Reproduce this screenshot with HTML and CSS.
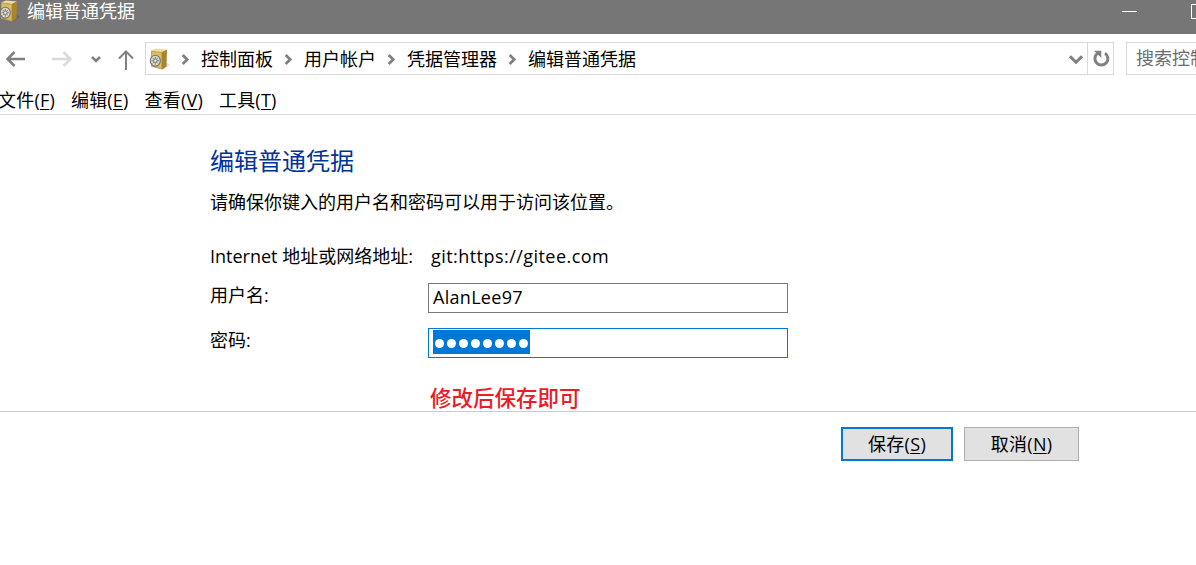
FILE: index.html
```html
<!DOCTYPE html>
<html lang="zh-CN">
<head>
<meta charset="utf-8">
<title>编辑普通凭据</title>
<link rel="stylesheet" href="styles.css">
</head>
<body>
  <svg class="defs" width="0" height="0">
    <symbol id="safe" viewBox="0 0 21 22">
      <path d="M3 19 L14 21.800 L20.800 17 L18 15z" fill="#000" opacity=".12"/>
      <path d="M2 2.500 L7 .6 L18 1.500 L13 4z" fill="#f0dc96"/>
      <path d="M2 2.500 L13 4 L13 21.500 L2 18.500z" fill="#c9a64a"/>
      <path d="M13 4 L18 1.500 L17.500 18.500 L13 21.500z" fill="#a8842c"/>
      <path d="M3 3.700 L12 5 V19.800 L3 17.500z" fill="#d8bd6a"/>
      <ellipse cx="6.300" cy="12.700" rx="5" ry="5.400" fill="#dcdbd4" stroke="#77756b" stroke-width="1.100"/>
      <path d="M6.300 8.700 V16.700 M2.500 12.700 H10 M3.700 9.900 L8.900 15.500 M8.900 9.900 L3.700 15.500" stroke="#77766f" stroke-width=".9"/>
      <circle cx="6.300" cy="12.700" r="1.700" fill="#eee" stroke="#66655f" stroke-width=".8"/>
    </symbol>
    <symbol id="chevron" viewBox="0 0 9 11">
      <path d="M1.700 1 L6.200 5.500 L1.700 10" fill="none" stroke="#808080" stroke-width="2.800"/>
    </symbol>
  </svg>

  <header class="titlebar">
    <svg class="safe"><use href="#safe"/></svg>
    <span class="caption">编辑普通凭据</span>
    <span class="minimize"></span>
    <span class="maximize"></span>
  </header>

  <nav class="navbar">
    <svg class="arrow back" viewBox="0 0 20 18"><path d="M19 9 H2 M8.500 2 L1.500 9 L8.500 16"/></svg>
    <svg class="arrow forward" viewBox="0 0 20 18"><path d="M0 9 H18 M11.500 2 L18.500 9 L11.500 16"/></svg>
    <svg class="recent" viewBox="0 0 10 7"><path d="M1 1 L5 5 L9 1"/></svg>
    <svg class="arrow up" viewBox="0 0 16 20"><path d="M8 20 V2 M1 8.500 L8 1.500 L15 8.500"/></svg>
    <div class="address">
      <svg class="safe"><use href="#safe"/></svg>
      <svg class="chevron"><use href="#chevron"/></svg>
      <span>控制面板</span>
      <svg class="chevron"><use href="#chevron"/></svg>
      <span>用户帐户</span>
      <svg class="chevron"><use href="#chevron"/></svg>
      <span>凭据管理器</span>
      <svg class="chevron"><use href="#chevron"/></svg>
      <span>编辑普通凭据</span>
      <svg class="dropdown" viewBox="0 0 14 9"><path d="M1 1.300 L7 7.300 L13 1.300"/></svg>
      <div class="refresh">
        <svg viewBox="0 0 17 17"><path class="ring" d="M12 3.200 A6.500 6.500 0 1 1 4.500 3.400"/><path class="head" d="M1 .8 H8.300 V8.100z"/></svg>
      </div>
    </div>
    <div class="search">搜索控制</div>
  </nav>

  <ul class="menu">
    <li>文件(<u>F</u>)</li>
    <li>编辑(<u>E</u>)</li>
    <li>查看(<u>V</u>)</li>
    <li>工具(<u>T</u>)</li>
  </ul>

  <main class="content">
    <h1>编辑普通凭据</h1>
    <p class="hint">请确保你键入的用户名和密码可以用于访问该位置。</p>
    <div class="row location">
      <span class="label">Internet 地址或网络地址:</span>
      <span class="value">git:https://gitee.com</span>
    </div>
    <div class="row">
      <span class="label">用户名:</span>
      <div class="field">AlanLee97</div>
    </div>
    <div class="row">
      <span class="label">密码:</span>
      <div class="field focused"><span class="selection"><i></i><i></i><i></i><i></i><i></i><i></i><i></i><i></i></span></div>
    </div>
    <p class="note">修改后保存即可</p>
  </main>

  <footer class="buttons">
    <button class="save">保存(<u>S</u>)</button>
    <button class="cancel">取消(<u>N</u>)</button>
  </footer>
</body>
</html>
```
FILE: styles.css
```css
* {
  box-sizing: border-box;
}

body {
  margin: 0;
  height: 565px;
  overflow: hidden;
  background: #fff;
  color: #000;
  font: 18px/24px "Open Sans", "Noto Sans CJK SC", sans-serif;
  white-space: nowrap;
}

h1, p, ul {
  margin: 0;
  padding: 0;
  font-weight: normal;
}

svg {
  flex: none;
  display: block;
}

.defs {
  position: absolute;
}

.safe {
  width: 21px;
  height: 22px;
}

/* title bar */
.titlebar {
  display: flex;
  height: 34px;
  overflow: hidden;
  background: #767676;
  color: #fff;
}

.titlebar .safe {
  margin-left: -1px;
}

.caption {
  margin-left: 7px;
  line-height: 23px;
}

.minimize {
  width: 15px;
  height: 1px;
  margin: 11px 54px 0 auto;
  background: #fff;
}

.maximize {
  width: 5px;
  height: 15px;
  margin-top: 4px;
  border: 1px solid #fff;
  border-right: 0;
}

/* navigation */
.navbar {
  display: flex;
  align-items: center;
  height: 49px;
  padding-left: 6px;
}

.arrow, .recent, .dropdown {
  fill: none;
  stroke: #808080;
  stroke-width: 2.6;
}

.back, .forward {
  width: 20px;
  height: 18px;
  margin-top: 1px;
}

.forward {
  margin-left: 26px;
  stroke: #dadada;
}

.recent {
  width: 10px;
  height: 7px;
  margin: 1px 0 0 19px;
}

.up {
  width: 16px;
  height: 20px;
  margin: 3px 11px 0 17px;
  stroke-width: 2;
}

.address {
  display: flex;
  align-items: center;
  width: 969px;
  height: 33px;
  flex: none;
  padding-left: 3px;
  border: 1px solid #d9d9d9;
}

.chevron {
  width: 9px;
  height: 11px;
  margin: 1px 11px 0;
}

.dropdown {
  width: 14px;
  height: 9px;
  margin: 1px 4px 0 auto;
  stroke-width: 3;
}

.refresh {
  display: flex;
  align-items: center;
  justify-content: center;
  width: 26px;
  height: 31px;
  padding-left: 1px;
  border-left: 1px solid #d9d9d9;
}

.refresh svg {
  width: 17px;
  height: 17px;
}

.ring {
  fill: none;
  stroke: #808080;
  stroke-width: 3;
}

.head {
  fill: #808080;
}

.search {
  flex: 1;
  width: 0;
  height: 33px;
  overflow: hidden;
  margin-left: 12px;
  padding: 3px 0 3px 9px;
  border: 1px solid #d9d9d9;
  border-right: 0;
  color: #6d6d6d;
}

/* menu */
.menu {
  display: flex;
  height: 32px;
  padding-top: 5px;
  margin-left: -2px;
  border-bottom: 1px solid #d9d9d9;
  list-style: none;
}

.menu li {
  margin-right: 16px;
  letter-spacing: 0.2px;
}

u {
  text-underline-offset: 2px;
  text-decoration-thickness: 1px;
}

/* form */
.content {
  height: 297px;
  padding: 30px 0 0 210px;
  border-bottom: 1px solid #ccc;
}

h1 {
  height: 45px;
  color: #003399;
  font-size: 24px;
  line-height: 32px;
}

.hint {
  height: 54px;
}

.row {
  display: flex;
  height: 45px;
}

.location {
  height: 39px;
}

.label {
  width: 218px;
}

.value {
  padding-left: 3px;
  letter-spacing: 0.45px;
}

.field {
  width: 360px;
  height: 30px;
  padding: 1px 4px;
  border: 1px solid #7a7a7a;
  letter-spacing: 0.3px;
}

.focused {
  border-color: #0078d7;
}

.selection {
  display: flex;
  align-items: center;
  width: 97px;
  height: 24px;
  padding: 3px 0 0 2px;
  gap: 3px;
  background: #0078d7;
}

.selection i {
  width: 9px;
  height: 9px;
  border-radius: 50%;
  background: #fff;
}

.note {
  padding: 13px 0 0 220px;
  color: #ed1c24;
  font-size: 21.5px;
  font-weight: 500;
}

/* buttons */
.buttons {
  display: flex;
  gap: 11px;
  padding: 15px 0 0 841px;
}

button {
  width: 115px;
  height: 34px;
  padding: 0;
  border: 1px solid #adadad;
  background: #e1e1e1;
  color: #000;
  font: inherit;
  letter-spacing: 0.3px;
}

.save {
  width: 112px;
  border: 2px solid #0078d7;
}
```
